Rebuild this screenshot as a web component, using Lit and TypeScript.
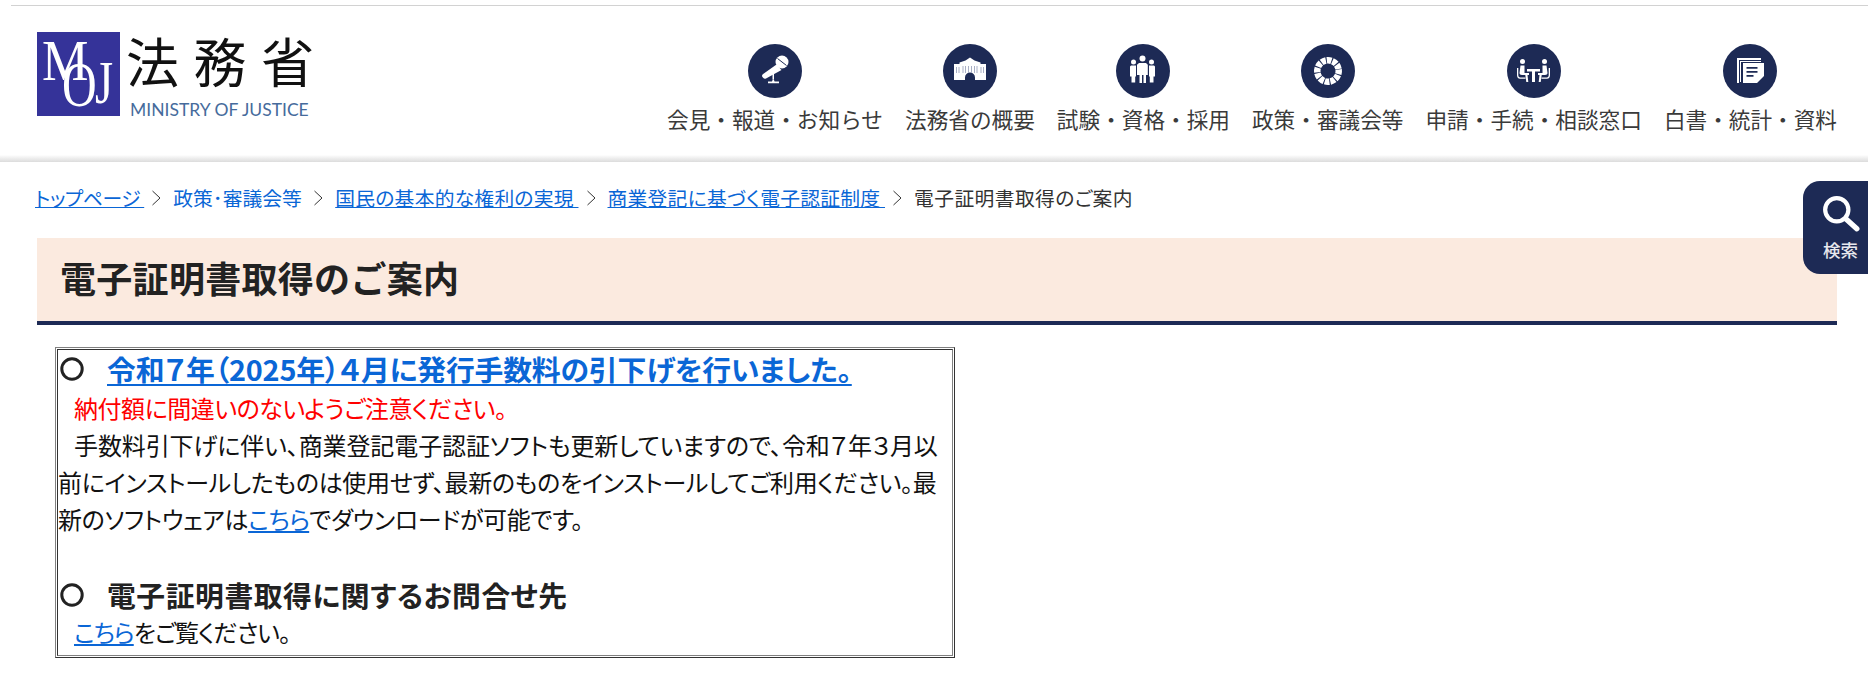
import { LitElement, html, css, svg } from "lit";
import { customElement } from "lit/decorators.js";

const icons = [
  svg`<g fill="#fff"><circle cx="34" cy="18" r="6.500"/><path d="M29.500 14.500l9 7" stroke="#1d2a55" stroke-width="1" fill="none"/><path d="M28.500 20.500l5 5.500-15.500 8.500c-1 .5-2 .3-2.700-.5l-.8-1c-.7-.9-.6-2 .3-2.700z"/><path d="M24.500 27.500h1.500v8h-1.500z"/><path d="M24.800 35.500h1l.8 2h4.400v1.700h-11v-1.700h4z"/></g>`,
  svg`<g fill="#fff"><path d="M11 20h5.500v-1.500l6-2 4.500-3 4.500 3 6 2V20H43v16H32v-2.500a5 5 0 0 0-10 0V36H11z"/><path d="M13.500 23v6M16 23v6M20 22v7M22.500 22v7M25.500 22v7M28.500 22v7M31.500 22v7M34 22v7M38 23v6M40.500 23v6" stroke="#a9afc5" stroke-width="1" fill="none"/></g>`,
  svg`<g fill="#fff"><circle cx="26.500" cy="14.500" r="3"/><path d="M23 19h7l1.800 1.800V31h-1.800v8h-2.500v-8h-1.500v8h-2.500v-8H21V20.800z"/><circle cx="17.500" cy="18" r="2.500"/><path d="M15 21.500h5v11h-.8v6h-3.700v-6H14v-10z"/><circle cx="35.500" cy="18" r="2.500"/><path d="M33 21.500h5l1 1v10h-1.500v6h-3.700v-6H33z"/></g>`,
  svg`<g fill="none" stroke="#fff" stroke-width="6.500" transform="translate(27 27) rotate(-8)"><circle r="10.750" stroke-dasharray="4.630 1"/></g>`,
  svg`<g fill="#fff"><circle cx="15.500" cy="17.500" r="2.500"/><circle cx="37.500" cy="17.500" r="2.500"/><path d="M20 25h13v2.500h-5V38h-3V27.500h-5z"/><path d="M13.500 21.500h4v7.500h4.500v2h-1.500l.8 7h-2l-1-7h-3.300c-1.500 0-2.500-.7-2.500-2z"/><path d="M39.500 21.500h-4v7.500H31v2h1.500l-.8 7h2l1-7h3.300c1.500 0 2.500-.7 2.500-2z"/><path d="M10 24h1.300v7c0 1.200.6 2.500 2 2.500h5.200v1.300H13c-2 0-3-1.600-3-3.500zM43 24h-1.300v7c0 1.200-.6 2.500-2 2.500h-5.200v1.300H40c2 0 3-1.600 3-3.500z"/></g>`,
  svg`<g><path d="M14 39V14h24v2H16v23z" fill="#fff"/><path d="M17 38V17h21v1H18v20z" fill="#fff"/><path fill="#fff" fill-rule="evenodd" d="M20 19h21v13l-7 7H20zM23.500 23v1.800h11V23zM23.500 27v1.800h11V27zM23.500 31v1.800h7V31z"/></g>`,
];

const navItems = [
  "会見・報道・お知らせ",
  "法務省の概要",
  "試験・資格・採用",
  "政策・審議会等",
  "申請・手続・相談窓口",
  "白書・統計・資料",
];

@customElement("app-root")
export class AppRoot extends LitElement {
  static styles = css`
    :host {
      display: block;
      position: relative;
      width: 1868px;
      height: 688px;
      overflow: hidden;
      background: #fff;
      color: #222;
      font-family: "Noto Sans CJK JP", "Noto Sans", sans-serif;
    }
    a { color: #0a66d6; }
    .topline { height: 1px; margin: 5px 0 0 11px; background: #d2d2d2; }
    header {
      display: flex;
      justify-content: space-between;
      height: 156px;
      box-sizing: border-box;
      padding: 26px 31px 0 37px;
      background: linear-gradient(#fff 0, #fff 149px, #f4f4f4 151px, #dcdcdc 156px);
    }
    .logo { display: flex; gap: 6px; align-items: flex-start; }
    .mark {
      position: relative;
      width: 83px;
      height: 84px;
      background: #353399;
      color: #fff;
      font-family: "Liberation Serif", serif;
    }
    .mark span { position: absolute; line-height: 1; }
    .mark .m { left: 5px; top: 0; font-size: 58px; transform: scaleX(.9); transform-origin: left top; }
    .mark .o { left: 25px; top: 22px; font-size: 48px; transform: scaleY(1.300); transform-origin: left top; }
    .mark .j { left: 58px; top: 19px; font-size: 62px; transform: scaleX(.75); transform-origin: left top; }
    .words { display: flex; flex-direction: column; }
    .kanji {
      font-size: 53px;
      line-height: 56px;
      letter-spacing: 14.500px;
      color: #111;
      white-space: nowrap;
      font-weight: 400;
    }
    .en {
      margin: 11px 0 0 4px;
      font-family: "Lato", sans-serif;
      font-size: 17.500px;
      line-height: 22px;
      color: #466b9c;
      white-space: nowrap;
    }
    nav { display: flex; gap: 22px; padding-top: 12px; }
    .item {
      display: flex;
      flex-direction: column;
      align-items: center;
      gap: 5px;
      color: #3a3a3a;
      font-size: 21.650px;
      line-height: 32px;
      white-space: nowrap;
    }
    .item svg { width: 54px; height: 54px; display: block; }
    .crumbs {
      display: flex;
      align-items: center;
      margin: 20px 0 0 35px;
      font-size: 19.800px;
      line-height: 32px;
      white-space: nowrap;
      color: #333;
      font-feature-settings: "palt";
    }
    .crumbs a { white-space: pre; }
    .crumbs a.plain { text-decoration: none; }
    .crumbs a.top { letter-spacing: -.4px; }
    .crumbs a.wide { letter-spacing: .25px; }
    .crumbs svg { width: 10px; height: 16px; margin: 0 12px 0 7px; flex: none; }
    .crumbs .cur { letter-spacing: .4px; }
    h1 {
      margin: 24px 31px 0 37px;
      height: 83px;
      padding-left: 23px;
      background: #fbeadf;
      border-bottom: 4px solid #1d2a55;
      font-size: 36px;
      letter-spacing: .3px;
      line-height: 78px;
      font-weight: 700;
      color: #222;
    }
    .box {
      width: 900px;
      height: 311px;
      box-sizing: border-box;
      margin: 22px 0 0 55px;
      border: 1px solid #808080;
      border-right-color: #333;
      border-bottom-color: #333;
      padding: 1px;
    }
    .inner {
      height: 100%;
      box-sizing: border-box;
      border: 1px solid #333;
      border-right-color: #808080;
      border-bottom-color: #808080;
      font-size: 24px;
      line-height: 37px;
      color: #111;
      white-space: nowrap;
    }
    .inner p { margin: 0; font-feature-settings: "palt"; }
    .h {
      display: flex;
      align-items: center;
      font-size: 28.800px;
      line-height: 37px;
      font-weight: 700;
      color: #222;
      font-feature-settings: "palt";
    }
    .h .o {
      width: 24px;
      height: 24px;
      margin: 0 23px 0 2px;
      flex: none;
      display: block;
    }
    .h1 { letter-spacing: -.15px; margin-bottom: 2px; }
    .h2 { letter-spacing: .55px; margin-top: 39px; }
    .h a { text-underline-offset: 3px; text-decoration-thickness: 2px; }
    .ind { padding-left: 16px; }
    .red { color: #f00; letter-spacing: -.45px; }
    .l1 { letter-spacing: -.1px; }
    .l2 { letter-spacing: -.3px; }
    .l3 { letter-spacing: -.33px; }
    .l4 { letter-spacing: -1px; }
    .search {
      position: absolute;
      right: 0;
      top: 181px;
      width: 65px;
      height: 93px;
      border-radius: 17px 0 0 17px;
      background: #1d2a55;
      display: flex;
      flex-direction: column;
      align-items: center;
      color: #e8e8ee;
      font-size: 17.500px;
      font-weight: 500;
      line-height: 20px;
      padding: 14px 0 0 7px;
      box-sizing: border-box;
    }
    .search svg { width: 38px; height: 38px; margin-bottom: 7px; margin-left: 3px; }
    .search span { margin-left: 3px; }
  `;

  render() {
    const sep = html`<svg viewBox="0 0 10 16"><path d="M1.500 1l7.500 7-7.500 7" fill="none" stroke="#333" stroke-width="1"/></svg>`;
    const ring = html`<svg class="o" viewBox="0 0 24 24"><circle cx="12" cy="12" r="10.200" fill="none" stroke="#222" stroke-width="3"/></svg>`;
    return html`
      <div class="topline"></div>
      <header>
        <div class="logo">
          <div class="mark"><span class="m">M</span><span class="o">O</span><span class="j">J</span></div>
          <div class="words">
            <div class="kanji">法務省</div>
            <div class="en">MINISTRY OF JUSTICE</div>
          </div>
        </div>
        <nav>
          ${navItems.map(
            (t, i) => html`<div class="item">
              <svg viewBox="0 0 54 54"><circle cx="27" cy="27" r="27" fill="#1d2a55"/>${icons[i]}</svg>
              <span>${t}</span>
            </div>`
          )}
        </nav>
      </header>
      <div class="crumbs">
        <a href="#" class="top">トップページ </a>${sep}
        <a href="#" class="plain">政策･審議会等 </a>${sep}
        <a href="#" class="wide">国民の基本的な権利の実現 </a>${sep}
        <a href="#" class="wide">商業登記に基づく電子認証制度 </a>${sep}
        <span class="cur">電子証明書取得のご案内</span>
      </div>
      <h1>電子証明書取得のご案内</h1>
      <div class="box">
        <div class="inner">
          <div class="h h1">${ring}<a href="#">令和７年（2025年）４月に発行手数料の引下げを行いました。</a></div>
          <p class="red ind">納付額に間違いのないようご注意ください。</p>
          <p class="ind l1">手数料引下げに伴い、商業登記電子認証ソフトも更新していますので、令和７年３月以</p>
          <p class="l2">前にインストールしたものは使用せず、最新のものをインストールしてご利用ください。最</p>
          <p class="l3">新のソフトウェアは<a href="#">こちら</a>でダウンロードが可能です。</p>
          <div class="h h2">${ring}<span>電子証明書取得に関するお問合せ先</span></div>
          <p class="ind l4"><a href="#">こちら</a>をご覧ください。</p>
        </div>
      </div>
      <div class="search">
        <svg viewBox="0 0 36 36"><circle cx="14" cy="14" r="11" fill="none" stroke="#fff" stroke-width="4"/><path d="M22.500 22.500L33 32" stroke="#fff" stroke-width="5" stroke-linecap="round"/></svg>
        <span>検索</span>
      </div>
    `;
  }
}
